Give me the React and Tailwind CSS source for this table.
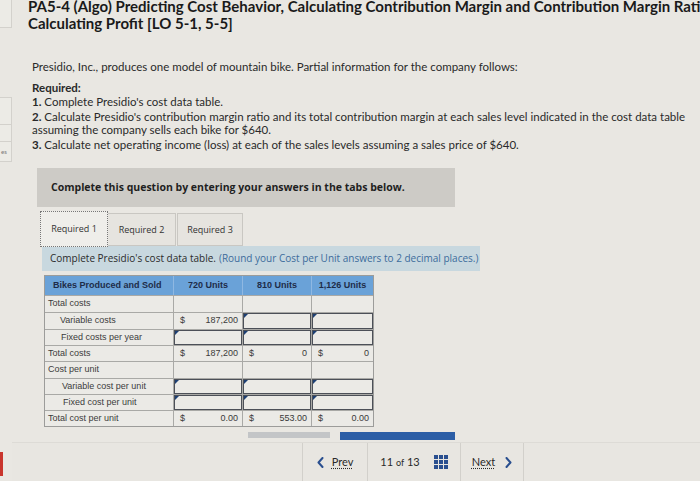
import React from "react";

const LABEL_FONT = { fontFamily: '"Liberation Sans", Arial, sans-serif' };

function InputCell() {
  return (
    <div className="relative h-full w-full border-[1.5px] border-[#4c5058]">
      <div className="absolute left-0 top-0 h-0 w-0 border-t-[4px] border-r-[4px] border-t-[#1d3f73] border-r-transparent" />
    </div>
  );
}

function ValueCell({ value }) {
  return (
    <div className="flex h-full w-full items-center justify-between px-[4px] text-[9px] text-[#3a3a3a]">
      <span className="pl-[2px]">$</span>
      <span>{value}</span>
    </div>
  );
}

const rows = [
  { label: "Total costs", indent: 0, h: "h-[16px]", cells: ["blank", "blank", "blank"] },
  { label: "Variable costs", indent: 12, h: "h-[16px]", cells: ["187,200", "input", "input"] },
  { label: "Fixed costs per year", indent: 13, h: "h-[15px]", cells: ["input", "input", "input"] },
  { label: "Total costs", indent: 0, h: "h-[15px]", cells: ["187,200", "0", "0"] },
  { label: "Cost per unit", indent: 0, h: "h-[16px]", cells: ["blank", "blank", "blank"] },
  { label: "Variable cost per unit", indent: 14, h: "h-[15px]", cells: ["input", "input", "input"] },
  { label: "Fixed cost per unit", indent: 15, h: "h-[15px]", cells: ["input", "input", "input"] },
  { label: "Total cost per unit", indent: 0, h: "h-[15px]", cells: ["0.00", "553.00", "0.00"] },
];

function CostTable() {
  return (
    <div className="ml-[2px] mt-[4px] w-[330px] border border-[#9c9c9a]" style={LABEL_FONT}>
      <div className="grid grid-cols-[129px_69px_69px_61px] bg-[#6aa2d8] text-[9px] font-bold text-[#1e2c48]">
        <div className="flex h-[19px] items-center border-r border-[#8fb8e2] pl-[8px]">Bikes Produced and Sold</div>
        <div className="flex h-[19px] items-center justify-center border-r border-[#8fb8e2]">720 Units</div>
        <div className="flex h-[19px] items-center justify-center border-r border-[#8fb8e2]">810 Units</div>
        <div className="flex h-[19px] items-center justify-center">1,126 Units</div>
      </div>
      {rows.map((r, i) => (
        <div key={i} className="grid grid-cols-[129px_69px_69px_61px] border-t border-[#a9a9a6] bg-[#ebeae6]">
          <div className={`${r.h} flex items-center border-r border-[#a9a9a6] text-[9px] text-[#3c3c3c]`}>
            <span style={{ paddingLeft: 3 + r.indent }}>{r.label}</span>
          </div>
          {r.cells.map((c, j) => (
            <div key={j} className={`${r.h} ${j < 2 ? "border-r border-[#a9a9a6]" : ""}`}>
              {c === "input" ? <InputCell /> : c === "blank" ? null : <ValueCell value={c} />}
            </div>
          ))}
        </div>
      ))}
    </div>
  );
}

function GridIcon() {
  return (
    <svg width="14" height="14" viewBox="0 0 14 14">
      {[0, 1, 2].map((r) =>
        [0, 1, 2].map((c) => (
          <rect key={`${r}${c}`} x={c * 5} y={r * 5} width="4" height="4" fill="#2a4f8f" />
        ))
      )}
    </svg>
  );
}

function Chevron({ dir }) {
  return (
    <svg width="7" height="11" viewBox="0 0 7 11">
      <path
        d={dir === "left" ? "M5.5 1 L1.5 5.5 L5.5 10" : "M1.5 1 L5.5 5.5 L1.5 10"}
        fill="none"
        stroke="#2a4f8f"
        strokeWidth="2"
        strokeLinecap="round"
        strokeLinejoin="round"
      />
    </svg>
  );
}

export default function App() {
  return (
    <div
      className="relative flex h-[481px] w-[700px] overflow-hidden bg-[#e9e7e2] text-[#1f1f1f]"
      style={{ fontFamily: 'Lato, "Open Sans", sans-serif' }}
    >
      {/* left sidebar sliver */}
      <div className="flex w-[12px] shrink-0 flex-col">
        <div className="h-[28px] border-b border-r border-[#d3d1cc] bg-[#ecebe6]" />
        <div className="mt-[69px] h-[28px] border border-l-0 border-[#d3d1cc] bg-[#ecebe6]" />
        <div className="h-[17px] border-b border-r border-[#d3d1cc] bg-[#ecebe6]" />
        <div className="flex h-[20px] items-center border-b border-r border-[#d3d1cc] bg-[#ecebe6] pl-[1px] text-[6px] text-[#777]">
          es
        </div>
        <div className="mt-auto mb-[5px] h-[24px] w-[3px] bg-[#c9352d]" />
      </div>

      {/* main */}
      <div className="flex min-w-0 flex-1 flex-col">
        <div className="-mt-[2px] ml-[16px] whitespace-nowrap text-[15px] font-bold leading-[17px] text-[#1a1a1a]">
          <div>PA5-4 (Algo) Predicting Cost Behavior, Calculating Contribution Margin and Contribution Margin Ratio,</div>
          <div>Calculating Profit [LO 5-1, 5-5]</div>
        </div>

        <div className="ml-[20px] mt-[28px] text-[11.5px] leading-[13px] text-[#2a2a2a]">
          <p>Presidio, Inc., produces one model of mountain bike. Partial information for the company follows:</p>
          <p className="mt-[8px] font-bold">Required:</p>
          <p className="mt-[1px]"><span className="font-bold">1.</span> Complete Presidio's cost data table.</p>
          <p className="mt-[2px] whitespace-nowrap">
            <span className="font-bold">2.</span> Calculate Presidio's contribution margin ratio and its total contribution margin at each sales level indicated in the cost data table
            <br />
            assuming the company sells each bike for $640.
          </p>
          <p className="mt-[2px]"><span className="font-bold">3.</span> Calculate net operating income (loss) at each of the sales levels assuming a sales price of $640.</p>
        </div>

        <div className="ml-[25px] mt-[17px] flex h-[39px] w-[418px] items-center bg-[#cdcbc6] pl-[14px]">
          <span className="text-[10.5px] font-bold text-[#1f1f1f]" style={{ fontFamily: '"Open Sans", sans-serif' }}>
            Complete this question by entering your answers in the tabs below.
          </span>
        </div>

        <div className="ml-[28px] mt-[4px] flex items-end text-[9px] text-[#333]" style={{ fontFamily: '"Open Sans", sans-serif' }}>
          <div className="relative z-10 -mb-[1px] flex h-[36px] w-[68px] items-center justify-center border border-dotted border-[#777] bg-[#efeeea]">
            Required 1
          </div>
          <div className="flex h-[33px] w-[68px] items-center justify-center border border-l-0 border-[#c9c7c2] bg-[#e6e4df]">
            Required 2
          </div>
          <div className="ml-[1px] flex h-[33px] w-[66px] items-center justify-center border border-[#c9c7c2] bg-[#e6e4df]">
            Required 3
          </div>
        </div>

        <div
          className="ml-[30px] flex h-[25px] w-[438px] items-center whitespace-nowrap bg-[#c8d8df] pl-[8px] text-[10px]"
          style={{ fontFamily: '"Open Sans", sans-serif' }}
        >
          <span className="text-[#2b2b2b]">Complete Presidio's cost data table.</span>
          <span className="ml-[3px] text-[#3d6c9c]">(Round your Cost per Unit answers to 2 decimal places.)</span>
        </div>

        <div className="ml-[30px]">
          <CostTable />
        </div>

        <div className="ml-[236px] mt-[5px] flex items-start gap-[10px]">
          <div className="h-[6px] w-[82px] bg-[#c3c5c7]" />
          <div className="h-[8px] w-[115px] bg-[#2c5ea6]" />
        </div>

        <div className="mt-[2px] flex flex-1 items-stretch border-t border-[#dddbd6] bg-[#e8e6e1]">
          <div className="ml-[290px] flex border-l border-[#d2d0cb]">
            <div className="flex w-[64px] items-center justify-center gap-[8px] text-[11px] text-[#2a2a2a]">
              <Chevron dir="left" />
              <span className="underline decoration-dotted underline-offset-2">Prev</span>
            </div>
            <div className="flex w-[93px] items-center justify-center gap-[14px] border-l border-[#d2d0cb] text-[11px] text-[#2a2a2a]">
              <span>
                11 <span className="text-[9px]">of</span> 13
              </span>
              <GridIcon />
            </div>
            <div className="flex w-[64px] items-center justify-center gap-[10px] border-x border-[#d2d0cb] text-[11px] text-[#2a2a2a]">
              <span className="underline decoration-dotted underline-offset-2">Next</span>
              <Chevron dir="right" />
            </div>
          </div>
        </div>
      </div>
    </div>
  );
}
